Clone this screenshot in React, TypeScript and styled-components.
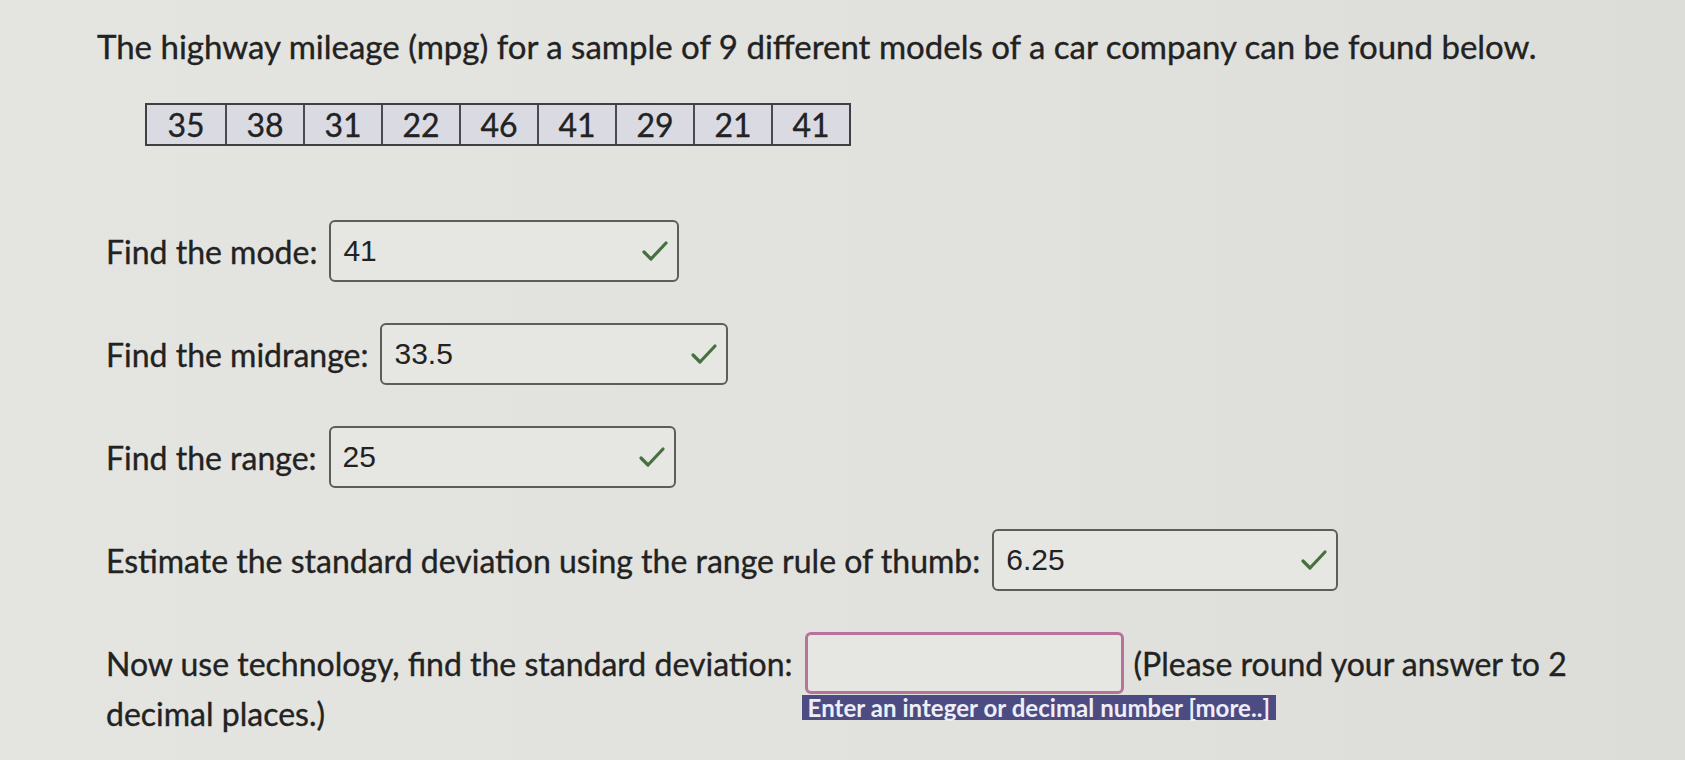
import React from 'react';
import styled, { createGlobalStyle } from 'styled-components';

const data = [35, 38, 31, 22, 46, 41, 29, 21, 41];

const GlobalStyle = createGlobalStyle`
  html, body {
    margin: 0;
    padding: 0;
    background: #e2e2de;
  }
  body {
    font-family: Lato, "Noto Sans", sans-serif;
    color: #222;
    -webkit-text-stroke: 0.35px #222;
  }
`;

const Page = styled.div`
  width: 1685px;
  height: 760px;
  overflow: hidden;
  padding: 26px 0 0 97px;
  box-sizing: border-box;
  background: linear-gradient(90deg, #e4e4e0 0%, #e1e1dd 60%, #dcdcd8 100%);
`;

const Title = styled.p`
  margin: 0;
  font-size: 33px;
  line-height: 40px;
`;

const Table = styled.div`
  display: inline-grid;
  grid-template-columns: repeat(9, 78px);
  margin: 37px 0 0 48px;
  border: 2px solid #3f3f44;
  background: #dadbe2;
`;

const Cell = styled.div`
  height: 39px;
  display: flex;
  align-items: center;
  justify-content: center;
  font-size: 32px;
  border-left: 2px solid #4a4a50;

  &:first-child {
    border-left: none;
  }
`;

const Questions = styled.div`
  display: flex;
  flex-direction: column;
  gap: 41px;
  margin: 74px 0 0 9px;
`;

const Row = styled.div`
  display: flex;
  align-items: center;
  gap: 12px;
  height: 62px;
`;

const Label = styled.span`
  font-size: 32px;
`;

const Box = styled.div<{ $width: number; $pending?: boolean }>`
  position: relative;
  width: ${({ $width }) => $width}px;
  height: 62px;
  box-sizing: border-box;
  display: flex;
  align-items: center;
  justify-content: space-between;
  padding: 0 8px 0 12px;
  border: ${({ $pending }) => ($pending ? '3px solid #b9729a' : '2px solid #5b5f58')};
  border-radius: 6px;
  background: #e6e6e3;
  font-family: "Liberation Sans", Arial, sans-serif;
  font-size: 30px;
  color: #222;
  -webkit-text-stroke: 0;
`;

const Check = styled.svg`
  width: 28px;
  height: 24px;
`;

const Tip = styled.div`
  position: absolute;
  left: -6px;
  top: 60px;
  white-space: nowrap;
  padding: 0 6px;
  height: 25px;
  line-height: 25px;
  background: #4d4c82;
  color: #eeeef6;
  font-family: Lato, "Noto Sans", sans-serif;
  font-weight: 700;
  font-size: 24px;
  letter-spacing: 0.05px;
  -webkit-text-stroke: 0;
`;

const Trail = styled.span`
  font-size: 32px;
  margin-left: -2px;
`;

const NextLine = styled.p`
  margin: 0;
  font-size: 32px;
  line-height: 40px;
`;

const Tick = () => (
  <Check viewBox="0 0 28 24">
    <path d="M3 13 L10 20 L25 4" fill="none" stroke="#47703f" strokeWidth="3.2" strokeLinecap="round" strokeLinejoin="round" />
  </Check>
);

const Answer = ({ label, value, width }: { label: string; value: string; width: number }) => (
  <Row>
    <Label>{label}</Label>
    <Box $width={width}>
      <span>{value}</span>
      <Tick />
    </Box>
  </Row>
);

export default function App() {
  return (
    <>
      <GlobalStyle />
      <Page>
        <Title>
          The highway mileage (mpg) for a sample of 9 different models of a car company can be found below.
        </Title>
        <Table>
          {data.map((n, i) => (
            <Cell key={i}>{n}</Cell>
          ))}
        </Table>
        <Questions>
          <Answer label="Find the mode:" value="41" width={350} />
          <Answer label="Find the midrange:" value="33.5" width={348} />
          <Answer label="Find the range:" value="25" width={347} />
          <Answer label="Estimate the standard deviation using the range rule of thumb:" value="6.25" width={346} />
          <div>
            <Row>
              <Label>Now use technology, find the standard deviation:</Label>
              <Box $width={319} $pending>
                <Tip>Enter an integer or decimal number [more..]</Tip>
              </Box>
              <Trail>(Please round your answer to 2</Trail>
            </Row>
            <NextLine>decimal places.)</NextLine>
          </div>
        </Questions>
      </Page>
    </>
  );
}
